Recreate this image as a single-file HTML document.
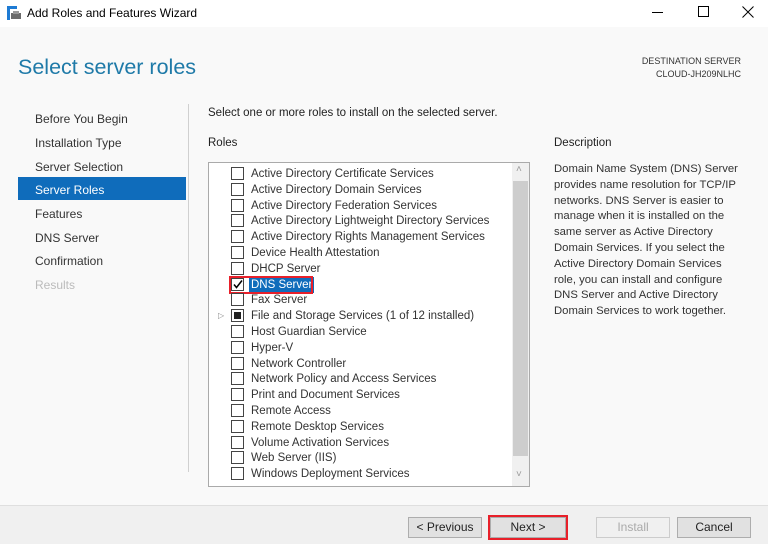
<!DOCTYPE html>
<html><head><meta charset="utf-8"><style>
*{margin:0;padding:0;box-sizing:border-box}
body{width:768px;height:544px;background:#f9f9f9;font-family:"Liberation Sans",sans-serif;font-size:11px;color:#222;position:relative;overflow:hidden}
.a{position:absolute;white-space:nowrap}
.tb{position:absolute;left:0;top:0;width:768px;height:27px;background:#fff}
.nav{position:absolute;left:35px;font-size:12px;color:#333}
.row{position:absolute;left:0;height:16px;width:300px}
.cb{position:absolute;left:22px;top:1px;width:13px;height:13px;border:1px solid #444;background:#fff}
.rt{position:absolute;left:42px;top:0;line-height:16px;font-size:11.5px;color:#333}
.btn{position:absolute;top:517px;height:21px;border:1px solid #adadad;background:#e1e1e1;text-align:center;line-height:19px;font-size:12px}
</style></head><body>
<div class="tb">
<svg class="a" style="left:7px;top:6px" width="14" height="14" viewBox="0 0 14 14"><rect x="0" y="0" width="3" height="14" fill="#1e7bd4"/><rect x="0" y="0" width="10" height="3" fill="#1e7bd4"/><rect x="4" y="7" width="10" height="6" fill="#6b6b6b"/><rect x="6" y="5" width="6" height="3" fill="#999"/></svg>
<div class="a" style="left:27px;top:6px;font-size:12px;color:#000">Add Roles and Features Wizard</div>
<div class="a" style="left:652px;top:12px;width:11px;height:1px;background:#000"></div>
<div class="a" style="left:698px;top:6px;width:11px;height:11px;border:1px solid #000"></div>
<svg class="a" style="left:742px;top:6px" width="12" height="12" viewBox="0 0 12 12"><path d="M0.5 0.5L11.5 11.5M11.5 0.5L0.5 11.5" stroke="#000" stroke-width="1"/></svg>
</div>
<div class="a" style="left:18px;top:55px;font-size:21.5px;color:#1f7aa8">Select server roles</div>
<div class="a" style="right:27px;top:55px;font-size:9px;color:#333;text-align:right;line-height:13px">DESTINATION SERVER<br>CLOUD-JH209NLHC</div>
<div class="nav a" style="top:112px">Before You Begin</div>
<div class="nav a" style="top:136px">Installation Type</div>
<div class="nav a" style="top:160px">Server Selection</div>
<div class="a" style="left:18px;top:177px;width:168px;height:23px;background:#0f6cbb"></div>
<div class="nav a" style="top:183px;color:#fff">Server Roles</div>
<div class="nav a" style="top:207px">Features</div>
<div class="nav a" style="top:231px">DNS Server</div>
<div class="nav a" style="top:254px">Confirmation</div>
<div class="nav a" style="top:278px;color:#bbb">Results</div>
<div class="a" style="left:188px;top:104px;width:1px;height:368px;background:#d0d0d0"></div>
<div class="a" style="left:208px;top:107px;font-size:11.5px">Select one or more roles to install on the selected server.</div>
<div class="a" style="left:208px;top:137px;font-size:11.5px">Roles</div>
<div class="a" style="left:554px;top:137px;font-size:11.5px">Description</div>
<div class="a" style="left:554px;top:162px;width:192px;font-size:11.3px;line-height:15.8px;white-space:normal;color:#333">Domain Name System (DNS) Server provides name resolution for TCP/IP networks. DNS Server is easier to manage when it is installed on the same server as Active Directory Domain Services. If you select the Active Directory Domain Services role, you can install and configure DNS Server and Active Directory Domain Services to work together.</div>
<div class="a" style="left:208px;top:162px;width:322px;height:325px;border:1px solid #aaa;background:#fff;overflow:hidden">
<div class="a" style="left:303px;top:0;width:17px;height:323px;background:#f0f0f0"></div>
<div class="a" style="left:304px;top:18px;width:15px;height:275px;background:#cdcdcd"></div>
<div class="a" style="left:307px;top:1px;font-size:10px;color:#999">˄</div>
<div class="a" style="left:307px;top:306px;font-size:10px;color:#999">˅</div>
<div style="position:absolute;left:0;top:3px">
<div class="row" style="top:0px"><div class="cb"></div><div class="rt">Active Directory Certificate Services</div></div>
<div class="row" style="top:15.8px"><div class="cb"></div><div class="rt">Active Directory Domain Services</div></div>
<div class="row" style="top:31.6px"><div class="cb"></div><div class="rt">Active Directory Federation Services</div></div>
<div class="row" style="top:47.4px"><div class="cb"></div><div class="rt">Active Directory Lightweight Directory Services</div></div>
<div class="row" style="top:63.2px"><div class="cb"></div><div class="rt">Active Directory Rights Management Services</div></div>
<div class="row" style="top:79px"><div class="cb"></div><div class="rt">Device Health Attestation</div></div>
<div class="row" style="top:94.8px"><div class="cb"></div><div class="rt">DHCP Server</div></div>
<div class="row" style="top:110.6px"><div class="cb"></div><svg class="a" style="left:24px;top:3px" width="10" height="9" viewBox="0 0 10 9"><path d="M1 4.5L3.5 7.5L9 0.5" stroke="#000" stroke-width="1.5" fill="none"/></svg><div class="rt" style="background:#0f6cbb;color:#fff;padding:0 2px;left:40px">DNS Server</div><div class="a" style="left:20px;top:-1px;width:84px;height:18px;border:2px solid #e8202a"></div></div>
<div class="row" style="top:126.4px"><div class="cb"></div><div class="rt">Fax Server</div></div>
<div class="row" style="top:142.2px"><div class="a" style="left:9px;top:0;font-size:8px;color:#888;line-height:16px">▷</div><div class="cb"></div><div class="a" style="left:25px;top:4px;width:7px;height:7px;background:#222"></div><div class="rt">File and Storage Services (1 of 12 installed)</div></div>
<div class="row" style="top:158px"><div class="cb"></div><div class="rt">Host Guardian Service</div></div>
<div class="row" style="top:173.8px"><div class="cb"></div><div class="rt">Hyper-V</div></div>
<div class="row" style="top:189.6px"><div class="cb"></div><div class="rt">Network Controller</div></div>
<div class="row" style="top:205.4px"><div class="cb"></div><div class="rt">Network Policy and Access Services</div></div>
<div class="row" style="top:221.2px"><div class="cb"></div><div class="rt">Print and Document Services</div></div>
<div class="row" style="top:237px"><div class="cb"></div><div class="rt">Remote Access</div></div>
<div class="row" style="top:252.8px"><div class="cb"></div><div class="rt">Remote Desktop Services</div></div>
<div class="row" style="top:268.6px"><div class="cb"></div><div class="rt">Volume Activation Services</div></div>
<div class="row" style="top:284.4px"><div class="cb"></div><div class="rt">Web Server (IIS)</div></div>
<div class="row" style="top:300.2px"><div class="cb"></div><div class="rt">Windows Deployment Services</div></div>
</div></div>
<div class="a" style="left:0;top:505px;width:768px;height:39px;background:#f0f0f0;border-top:1px solid #dfdfdf"></div>
<div class="btn" style="left:408px;width:74px">&lt; Previous</div>
<div class="btn" style="left:490px;width:76px">Next &gt;</div>
<div class="a" style="left:488px;top:515px;width:80px;height:25px;border:2px solid #e8202a"></div>
<div class="btn" style="left:596px;width:74px;background:#f0f0f0;border-color:#ccc;color:#aaa">Install</div>
<div class="btn" style="left:677px;width:74px">Cancel</div>
</body></html>
